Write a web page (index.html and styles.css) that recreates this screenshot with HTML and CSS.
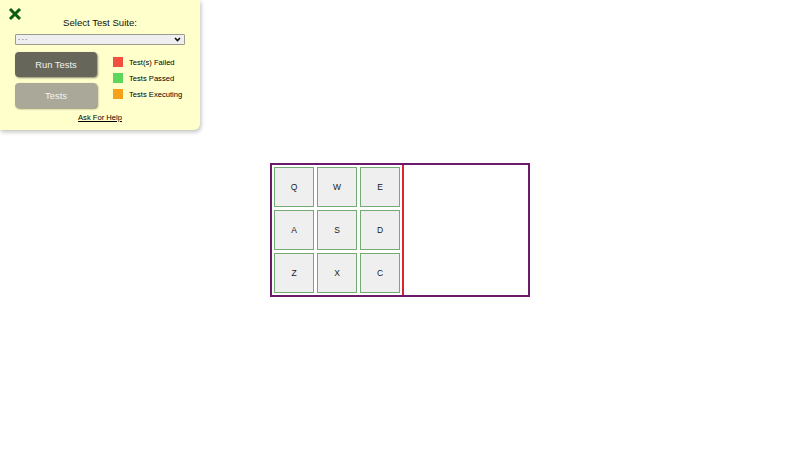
FILE: index.html
```html
<!DOCTYPE html>
<html lang="en">

<head>
    <meta charset="UTF-8">
    <meta name="viewport" content="width=device-width, initial-scale=1.0">
    <title>Keys</title>
    <link rel="stylesheet" href="styles.css">
</head>

<body>
    <div class="test-panel">
        <svg class="close" width="14" height="14" viewBox="0 0 14 14">
            <path d="M2 2 L12 12 M12 2 L2 12" stroke="#0b5c12" stroke-width="3" fill="none" />
        </svg>
        <div class="suite-label">Select Test Suite:</div>
        <div class="select-wrap">
            <select class="suite-select">
                <option>- - -</option>
            </select>
            <svg class="chevron" width="7" height="5" viewBox="0 0 7 5">
                <path d="M1 1 L3.5 3.5 L6 1" stroke="#111" stroke-width="1.6" fill="none" />
            </svg>
        </div>
        <div class="controls">
            <div class="buttons">
                <button class="btn run">Run Tests</button>
                <button class="btn tests">Tests</button>
            </div>
            <div class="legend">
                <div class="legend-item"><span class="swatch failed"></span>Test(s) Failed</div>
                <div class="legend-item"><span class="swatch passed"></span>Tests Passed</div>
                <div class="legend-item"><span class="swatch executing"></span>Tests Executing</div>
            </div>
        </div>
        <a class="help" href="#">Ask For Help</a>
    </div>

    <div class="stage">
        <div class="board">
            <div class="keys">
                <div class="key">Q</div>
                <div class="key">W</div>
                <div class="key">E</div>
                <div class="key">A</div>
                <div class="key">S</div>
                <div class="key">D</div>
                <div class="key">Z</div>
                <div class="key">X</div>
                <div class="key">C</div>
            </div>
            <div class="output"></div>
        </div>
    </div>
</body>

</html>
```

FILE: styles.css
```css
body {
    margin: 0;
    background-color: #fff;
    font-family: 'Liberation Sans', Arial, sans-serif;
}

.test-panel {
    position: absolute;
    top: 0;
    left: 0;
    width: 200px;
    height: 130px;
    box-sizing: border-box;
    padding: 17px 15px 0 15px;
    background-color: #ffffcc;
    border-bottom-right-radius: 6px;
    box-shadow: 1px 2px 4px rgba(0, 0, 0, 0.25);
    display: flex;
    flex-direction: column;
    z-index: 10;
}

.close {
    position: absolute;
    top: 7px;
    left: 8px;
}

.suite-label {
    text-align: center;
    font-size: 9.6px;
    line-height: 12px;
    color: #111;
}

.select-wrap {
    position: relative;
    margin-top: 5px;
}

.suite-select {
    display: block;
    appearance: none;
    width: 170px;
    height: 11px;
    margin: 0;
    padding: 0 0 0 2px;
    border: 1px solid #9a9a90;
    border-radius: 1px;
    background-color: #efefef;
    font-family: 'Liberation Sans', Arial, sans-serif;
    font-size: 6px;
    line-height: 9px;
    color: #333;
}

.chevron {
    position: absolute;
    top: 3px;
    right: 4px;
}

.controls {
    display: flex;
    margin-top: 7px;
}

.buttons {
    display: flex;
    flex-direction: column;
    gap: 6px;
}

.btn {
    width: 82px;
    height: 25px;
    border: none;
    border-radius: 4px;
    font-family: 'Liberation Sans', Arial, sans-serif;
    font-size: 9.4px;
    box-shadow: 1px 1px 2px rgba(0, 0, 0, 0.45);
    cursor: pointer;
}

.run {
    background-color: #66665a;
    color: #f2f2ee;
}

.tests {
    background-color: #a9a899;
    color: #f4f4ee;
}

.legend {
    display: flex;
    flex-direction: column;
    gap: 6px;
    margin-left: 16px;
    margin-top: 5px;
}

.legend-item {
    display: flex;
    align-items: center;
    height: 10px;
    font-size: 7.6px;
    color: #000;
}

.swatch {
    width: 10px;
    height: 10px;
    margin-right: 6px;
}

.failed {
    background-color: #f2503f;
}

.passed {
    background-color: #5cd65c;
}

.executing {
    background-color: #f7a11a;
}

.help {
    align-self: center;
    margin-top: 5px;
    font-size: 7.6px;
    line-height: 10px;
    color: #000;
    text-decoration: underline;
}

.stage {
    display: flex;
    justify-content: center;
    padding-top: 163px;
}

.board {
    display: flex;
    width: 260px;
    height: 134px;
    box-sizing: border-box;
    border: 2px solid #6b1a6b;
}

.keys {
    display: grid;
    grid-template-columns: repeat(3, 40px);
    grid-template-rows: repeat(3, 40px);
    gap: 3px;
    padding: 2px;
    border-right: 2px solid #d8262e;
}

.key {
    box-sizing: border-box;
    border: 1.5px solid #74aa74;
    background-color: #efefef;
    display: flex;
    align-items: center;
    justify-content: center;
    font-size: 8.5px;
    color: #1a1a1a;
}

.output {
    flex-grow: 1;
}
```
